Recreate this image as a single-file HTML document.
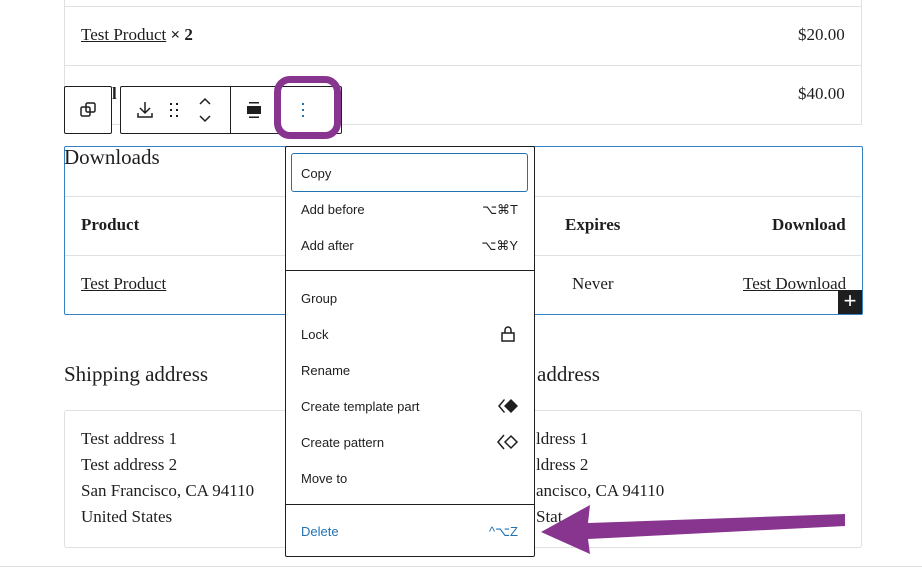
<!DOCTYPE html>
<html><head><meta charset="utf-8"><style>
*{box-sizing:border-box;margin:0;padding:0}
body{width:922px;height:568px;overflow:hidden;background:#fff;position:relative;font-family:"Liberation Serif",serif;font-size:17px;color:#1e1e1e}
.a{position:absolute}
u{text-decoration:underline}
.mi{position:absolute;left:15px;font-family:"Liberation Sans",sans-serif;font-size:13px;color:#1e1e1e}
.sc{position:absolute;right:16px;font-family:"Liberation Sans",sans-serif;font-size:13px;color:#1e1e1e}
</style></head><body>
<!-- top table -->
<div class="a" style="left:64px;top:-2px;width:798px;height:127px;border:1px solid #e0e0e0;border-top:none"></div>
<div class="a" style="left:64px;top:6px;width:798px;border-top:1px solid #e0e0e0"></div>
<div class="a" style="left:64px;top:65px;width:798px;border-top:1px solid #e0e0e0"></div>
<div class="a" style="left:81px;top:25px"><u>Test Product</u> <b>× 2</b></div>
<div class="a" style="left:798px;top:25px">$20.00</div>
<div class="a" style="left:798px;top:84px">$40.00</div>
<div class="a" style="left:112px;top:84px;font-weight:bold">l</div>
<!-- toolbar -->
<div class="a" style="left:64px;top:86px;width:48px;height:48px;border:1px solid #1e1e1e;border-radius:2px;background:#fff"></div>
<svg class="a" style="left:78px;top:100px" width="20" height="20" viewBox="0 0 20 20" fill="none" stroke="#1e1e1e" stroke-width="1.5"><rect x="3" y="7" width="9" height="9" rx="1.5"/><rect x="8" y="3" width="9" height="9" rx="1.5"/></svg>
<div class="a" style="left:120px;top:86px;width:222px;height:48px;border:1px solid #1e1e1e;border-radius:2px;background:#fff"></div>
<div class="a" style="left:230px;top:86px;height:48px;border-left:1px solid #1e1e1e"></div>
<svg class="a" style="left:133px;top:98px" width="24" height="24" viewBox="0 0 24 24" fill="none" stroke="#1e1e1e" stroke-width="1.5"><path d="M12 4v11M7 10l5 5 5-5M5 15v4h14v-4"/></svg>
<svg class="a" style="left:166px;top:101px" width="16" height="18" viewBox="0 0 16 18" fill="#1e1e1e"><rect x="4" y="2" width="2" height="2"/><rect x="10" y="2" width="2" height="2"/><rect x="4" y="8" width="2" height="2"/><rect x="10" y="8" width="2" height="2"/><rect x="4" y="14" width="2" height="2"/><rect x="10" y="14" width="2" height="2"/></svg>
<svg class="a" style="left:195px;top:96px" width="20" height="28" viewBox="0 0 20 28" fill="none" stroke="#1e1e1e" stroke-width="1.5"><path d="M5 8l5-5 5 5M5 20l5 5 5-5"/></svg>
<svg class="a" style="left:244px;top:100px" width="20" height="20" viewBox="0 0 20 20" fill="#1e1e1e"><rect x="3" y="6" width="14" height="8"/><rect x="5" y="2" width="10" height="1.5"/><rect x="5" y="16.5" width="10" height="1.5"/></svg>
<svg class="a" style="left:298px;top:100px" width="10" height="20" viewBox="0 0 10 20" fill="#2271b1"><rect x="4" y="3" width="2" height="2"/><rect x="4" y="9" width="2" height="2"/><rect x="4" y="15" width="2" height="2"/></svg>
<div class="a" style="left:274px;top:76px;width:67px;height:63px;border:7px solid #883590;border-radius:16px"></div>
<!-- downloads -->
<div class="a" style="left:64px;top:146px;width:799px;height:169px;border:1.5px solid #3582c4;border-radius:2px"></div>
<div class="a" style="left:64px;top:145px;font-size:21px">Downloads</div>
<div class="a" style="left:65px;top:196px;width:796px;border-top:1px solid #e0e0e0"></div>
<div class="a" style="left:65px;top:255px;width:796px;border-top:1px solid #e0e0e0"></div>
<div class="a" style="left:81px;top:215px;font-weight:bold">Product</div>
<div class="a" style="left:565px;top:215px;font-weight:bold">Expires</div>
<div class="a" style="left:772px;top:215px;font-weight:bold">Download</div>
<div class="a" style="left:81px;top:274px"><u>Test Product</u></div>
<div class="a" style="left:572px;top:274px">Never</div>
<div class="a" style="left:743px;top:274px"><u>Test Download</u></div>
<div class="a" style="left:838px;top:290px;width:24px;height:24px;background:#1e1e1e;color:#fff;font-family:'Liberation Sans';font-size:22px;line-height:22px;text-align:center">+</div>
<!-- shipping -->
<div class="a" style="left:64px;top:362px;font-size:21px">Shipping address</div>
<div class="a" style="left:537px;top:362px;font-size:21px">address</div>
<div class="a" style="left:64px;top:410px;width:798px;height:138px;border:1px solid #e0e0e0;border-radius:3px"></div>
<div class="a" style="left:81px;top:426px;line-height:26px">Test address 1<br>Test address 2<br>San Francisco, CA 94110<br>United States</div>
<div class="a" style="left:536px;top:426px;line-height:26px">ldress 1<br>ldress 2<br>ancisco, CA 94110<br>Stat</div>
<div class="a" style="left:0;top:566px;width:922px;border-top:1px solid #e0e0e0"></div>
<!-- menu -->
<div class="a" style="left:285px;top:146px;width:250px;height:411px;background:#fff;border:1px solid #1e1e1e;border-radius:2px">
<div class="a" style="left:5px;top:6px;width:237px;height:39px;border:1.5px solid #2271b1;border-radius:3px"></div>
<div class="mi" style="top:19px">Copy</div>
<div class="mi" style="top:55px">Add before</div><div class="sc" style="top:55px">⌥⌘T</div>
<div class="mi" style="top:91px">Add after</div><div class="sc" style="top:91px">⌥⌘Y</div>
<div class="a" style="left:0;top:123px;width:248px;border-top:1px solid #1e1e1e"></div>
<div class="mi" style="top:144px">Group</div>
<div class="mi" style="top:180px">Lock</div>
<svg class="a" style="left:214px;top:178px" width="16" height="18" viewBox="0 0 16 18" fill="none" stroke="#1e1e1e" stroke-width="1.5"><rect x="2" y="8" width="12" height="8"/><path d="M5 8V5a3 3 0 0 1 6 0v3"/></svg>
<div class="mi" style="top:216px">Rename</div>
<div class="mi" style="top:252px">Create template part</div>
<svg class="a" style="left:211px;top:250px" width="24" height="18" viewBox="0 0 24 18" fill="#1e1e1e"><path d="M7 2L1 9l6 7 1-1-5-6 5-6z"/><path d="M14 2l7 7-7 7-7-7z"/></svg>
<div class="mi" style="top:288px">Create pattern</div>
<svg class="a" style="left:211px;top:286px" width="24" height="18" viewBox="0 0 24 18" fill="none" stroke="#1e1e1e" stroke-width="1.5"><path d="M7 2L1 9l6 7"/><path d="M14 3l6 6-6 6-6-6z"/></svg>
<div class="mi" style="top:324px">Move to</div>
<div class="a" style="left:0;top:357px;width:248px;border-top:1px solid #1e1e1e"></div>
<div class="mi" style="top:377px;color:#2271b1">Delete</div><div class="sc" style="top:377px;color:#2271b1">^⌥Z</div>
</div>
<!-- arrow -->
<svg class="a" style="left:0;top:0" width="922" height="568"><path d="M845 514L588 523L590 505L541 532L590 554L588 539L845 526Z" fill="#883590"/></svg>
</body></html>
